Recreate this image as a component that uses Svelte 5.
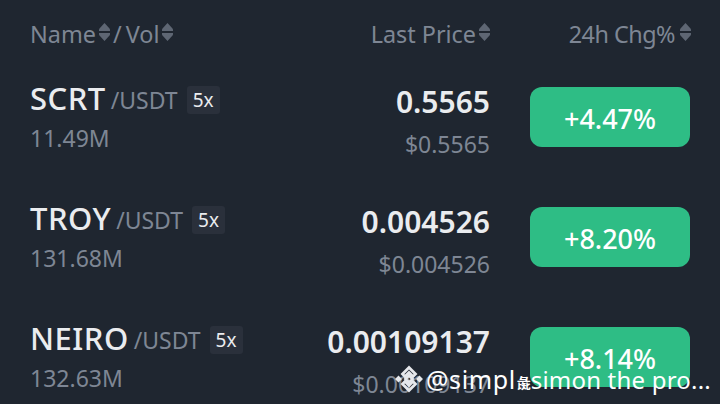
<script>
  const rows = [
    { name: "SCRT", vol: "11.49M", price: "0.5565", usd: "$0.5565", chg: "+4.47%" },
    { name: "TROY", vol: "131.68M", price: "0.004526", usd: "$0.004526", chg: "+8.20%" },
    { name: "NEIRO", vol: "132.63M", price: "0.00109137", usd: "$0.00109137", chg: "+8.14%" },
  ];
</script>

{#snippet sort()}
  <svg class="sort" width="11" height="20" viewBox="0 0 11 20">
    <path d="M5.5 1 L10.500 6.500 Q11 7 11 8 V9 H0 V8 Q0 7 .5 6.500 Z" fill="#5e6673" />
    <path d="M0 11 H11 V12 Q11 13 10.500 13.500 L5.500 19 L.5 13.500 Q0 13 0 12 Z" fill="#5e6673" />
  </svg>
{/snippet}

<div class="page">
  <div class="head">
    <div class="head-name">Name{@render sort()}<span class="slash">/</span>Vol{@render sort()}</div>
    <div class="head-price">Last Price{@render sort()}</div>
    <div class="head-chg"><span class="chg-label">24h Chg%</span>{@render sort()}</div>
  </div>

  {#each rows as row}
    <div class="row">
      <div class="name-col">
        <div class="pair">
          <span class="base">{row.name}</span>
          <span class="quote">/USDT</span>
          <span class="lev">5x</span>
        </div>
        <div class="vol">{row.vol}</div>
      </div>
      <div class="price-col">
        <div class="price">{row.price}</div>
        <div class="usd">{row.usd}</div>
      </div>
      <div class="badge">{row.chg}</div>
    </div>
  {/each}

  <div class="watermark">
    <svg width="28" height="28" viewBox="0 0 28 28">
      <g fill="none" stroke="#e6e8ec" stroke-width="2.8">
        <path d="M14 2.500 L20.500 9 L18 11.500 L14 7.500 L10 11.500 L7.500 9 Z" />
        <path d="M14 25.500 L20.500 19 L18 16.500 L14 20.500 L10 16.500 L7.500 19 Z" />
        <path d="M14 10.500 L17.500 14 L14 17.500 L10.500 14 Z" />
      </g>
      <path d="M3.500 10.500 L7 14 L3.500 17.500 L0 14 Z M24.500 10.500 L28 14 L24.500 17.500 L21 14 Z" fill="#e6e8ec" />
    </svg>
    <span class="mark-text"><span class="handle">@simpl</span><span class="blot">彘</span><span class="rest"> simon the pro...</span></span>
  </div>
</div>

<style>
  :global(body) {
    margin: 0;
    background: #1f2630;
  }

  .page {
    position: relative;
    width: 720px;
    height: 404px;
    overflow: hidden;
    background: #1f2630;
    font-family: "Noto Sans", Roboto, sans-serif;
    color: #eaecef;
  }

  .head {
    display: flex;
    align-items: center;
    height: 57px;
    padding: 10px 30px 0;
    box-sizing: border-box;
    font-size: 23.4px;
    color: #7e8694;
  }

  .head > div {
    display: flex;
    align-items: center;
    white-space: nowrap;
  }

  .head-name {
    width: 340px;
  }

  .head-price {
    width: 120px;
    justify-content: flex-end;
  }

  .head-chg {
    flex: 1;
    justify-content: flex-end;
  }

  .chg-label {
    letter-spacing: -0.5px;
  }

  .sort {
    margin-left: 3px;
    margin-top: -3px;
  }

  .head-chg .sort {
    margin-left: 5px;
    margin-right: -1px;
  }

  .slash {
    margin: 0 4px 0 3px;
  }

  .row {
    display: flex;
    height: 120px;
    padding: 30px 30px 0;
    box-sizing: border-box;
  }

  .name-col {
    flex: 1;
    margin-top: -8px;
  }

  .pair {
    display: flex;
    align-items: center;
    height: 38px;
  }

  .base {
    font-size: 31px;
    font-weight: 500;
    letter-spacing: 0.5px;
    color: #eaecef;
  }

  .quote {
    margin-left: 5px;
    margin-top: 4px;
    font-size: 23px;
    color: #7e8694;
  }

  .lev {
    margin-left: 9px;
    margin-top: 4px;
    padding: 0 6px;
    height: 28px;
    line-height: 28px;
    border-radius: 3px;
    background: #2a303b;
    font-size: 19px;
    color: #eaecef;
  }

  .vol {
    margin-top: 5px;
    font-size: 23px;
    color: #7e8694;
  }

  .price-col {
    width: 300px;
    text-align: right;
    margin-top: -4px;
  }

  .price {
    font-size: 30px;
    font-weight: 600;
    line-height: 38px;
    color: #eaecef;
  }

  .usd {
    margin-top: 7px;
    font-size: 23px;
    color: #7e8694;
  }

  .badge {
    flex: none;
    width: 160px;
    height: 60px;
    margin-left: 40px;
    border-radius: 12px;
    background: #2ebd85;
    color: #fff;
    font-size: 27px;
    font-weight: 500;
    line-height: 64px;
    text-align: center;
  }

  .watermark {
    position: absolute;
    left: 395px;
    top: 362px;
    display: flex;
    align-items: center;
    gap: 3px;
    color: #fff;
    white-space: nowrap;
  }

  .handle {
    font-size: 25px;
    letter-spacing: 0.6px;
  }

  .blot {
    font-family: "Noto Sans CJK SC", sans-serif;
    font-size: 14px;
    font-weight: 700;
    margin-left: 1px;
    position: relative;
    top: -1px;
  }

  .rest {
    font-size: 24px;
    letter-spacing: 0.2px;
  }
</style>
